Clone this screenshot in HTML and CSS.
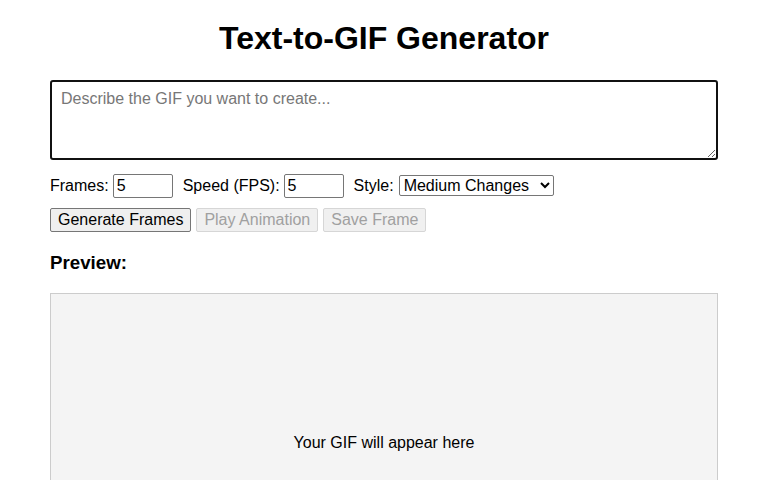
FILE: index.html
```html
<!DOCTYPE html>
<html lang="en">
<head>
    <meta charset="UTF-8">
    <meta name="viewport" content="width=device-width, initial-scale=1.0">
    <title>Text-to-GIF Generator</title>
    <link rel="stylesheet" href="styles.css">
</head>
<body>
    <h1>Text-to-GIF Generator</h1>

    <textarea id="prompt" class="prompt" placeholder="Describe the GIF you want to create..."></textarea>

    <div class="controls">
        <label class="field">Frames: <input type="number" id="frameCount" value="5"></label>
        <label class="field">Speed (FPS): <input type="number" id="fps" value="5"></label>
        <label class="field">Style:
            <select id="style">
                <option>Subtle Changes</option>
                <option selected>Medium Changes</option>
                <option>Big Changes</option>
            </select>
        </label>
    </div>

    <div class="actions">
        <button id="generateBtn">Generate Frames</button>
        <button id="playBtn" disabled>Play Animation</button>
        <button id="saveBtn" disabled>Save Frame</button>
    </div>

    <h3>Preview:</h3>
    <div id="preview" class="preview">
        <span>Your GIF will appear here</span>
    </div>
</body>
</html>
```

FILE: styles.css
```css
body {
    font-family: "Liberation Sans", Arial, sans-serif;
    max-width: 668px;
    margin: 0 auto;
    padding: 20px 0;
    font-size: 16px;
    color: #000;
}
h1 {
    text-align: center;
    font-size: 32px;
    margin: 0 0 23px;
    line-height: 37px;
}
.prompt {
    display: block;
    box-sizing: border-box;
    width: 100%;
    height: 80px;
    padding: 8px 9px;
    border: 2px solid #111;
    border-radius: 3px;
    font-family: inherit;
    font-size: 16px;
    resize: vertical;
    outline: none;
}
.prompt::placeholder { color: #777; }
.controls {
    display: flex;
    align-items: center;
    gap: 10px;
    margin-top: 14px;
}
.field {
    display: flex;
    align-items: center;
    gap: 4px;
}
.field input {
    box-sizing: border-box;
    width: 60px;
    height: 24px;
    padding: 1px 3px;
    border: 1px solid #767676;
    border-radius: 2px;
    font-family: inherit;
    font-size: 16px;
}
.field select {
    box-sizing: border-box;
    width: 155px;
    height: 21px;
    margin-bottom: 2px;
    margin-left: 1px;
    font-family: inherit;
    font-size: 16px;
    border: 1px solid #767676;
    border-radius: 2px;
    background: #fff;
}
.actions {
    display: flex;
    gap: 5px;
    margin-top: 10px;
}
.actions button {
    height: 24px;
    padding: 1px 7px;
    font-family: inherit;
    font-size: 16px;
    color: #000;
    background: #efefef;
    border: 1px solid #767676;
    border-radius: 2px;
}
.actions button:disabled {
    color: #a0a0a0;
    background: #f0f0f0;
    border-color: #d6d6d6;
}
h3 {
    font-size: 18.72px;
    margin: 20px 0 19px;
}
.preview {
    box-sizing: border-box;
    height: 300px;
    background: #f4f4f4;
    border: 1px solid #ccc;
    display: flex;
    align-items: center;
    justify-content: center;
}
```
